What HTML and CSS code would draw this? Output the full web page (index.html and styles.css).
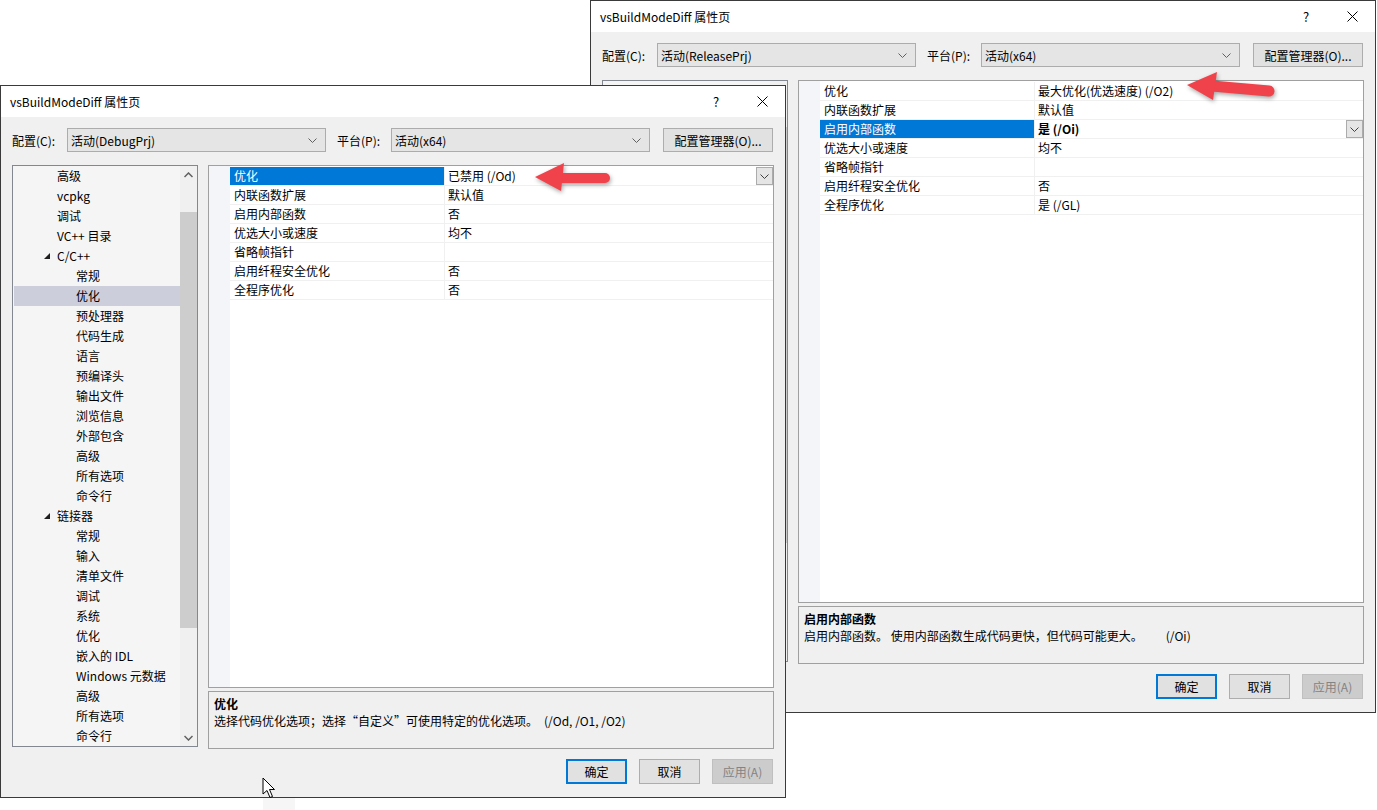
FILE: index.html
```html
<!DOCTYPE html>
<html>
<head>
    <title>vsBuildModeDiff 属性页</title>
    <link rel="stylesheet" href="styles.css">
</head>
<body>
<div class="desktop">

    <!-- Release window (behind); its tree is covered by the front window -->
    <div class="window win-back">
        <div class="titlebar">
            <span class="title">vsBuildModeDiff 属性页</span>
            <span class="cap-btn">?</span>
            <span class="cap-btn"><svg width="11" height="11" viewBox="0 0 11 11"><path d="M0.5 0.5L10.5 10.5M10.5 0.5L0.5 10.5" stroke="#000" stroke-width="1"/></svg></span>
        </div>
        <div class="config-row">
            <span class="cfg-label">配置(C):</span>
            <div class="combo"><span class="combo-text">活动(ReleasePrj)</span><svg class="chev" width="9" height="5" viewBox="0 0 9 5"><polyline points="0.5,0.5 4.5,4.5 8.5,0.5" fill="none" stroke="#606060"/></svg></div>
            <span class="cfg-label platform">平台(P):</span>
            <div class="combo"><span class="combo-text">活动(x64)</span><svg class="chev" width="9" height="5" viewBox="0 0 9 5"><polyline points="0.5,0.5 4.5,4.5 8.5,0.5" fill="none" stroke="#606060"/></svg></div>
            <div class="btn cfg-manager">配置管理器(O)...</div>
        </div>
        <div class="main">
            <div class="tree">
                <div class="tree-list"></div>
                <div class="scrollbar">
                    <div class="sb-btn"></div>
                    <div class="sb-track"><div class="sb-thumb"></div></div>
                    <div class="sb-btn"></div>
                </div>
            </div>
            <div class="side">
                <div class="grid">
                    <div class="gutter"></div>
                    <div class="rows">
                        <div class="row"><span class="name">优化</span><span class="value">最大优化(优选速度) (/O2)</span></div>
                        <div class="row"><span class="name">内联函数扩展</span><span class="value">默认值</span></div>
                        <div class="row sel"><span class="name">启用内部函数</span><span class="value"><b>是 (/Oi)</b></span><span class="drop"><svg width="9" height="5" viewBox="0 0 9 5"><polyline points="0.5,0.5 4.5,4.5 8.5,0.5" fill="none" stroke="#404040"/></svg></span></div>
                        <div class="row"><span class="name">优选大小或速度</span><span class="value">均不</span></div>
                        <div class="row"><span class="name">省略帧指针</span><span class="value"></span></div>
                        <div class="row"><span class="name">启用纤程安全优化</span><span class="value">否</span></div>
                        <div class="row"><span class="name">全程序优化</span><span class="value">是 (/GL)</span></div>
                    </div>
                </div>
                <div class="desc">
                    <div class="desc-title">启用内部函数</div>
                    <div>启用内部函数。 使用内部函数生成代码更快，但代码可能更大。<span class="flag flag-back">(/Oi)</span></div>
                </div>
            </div>
        </div>
        <div class="footer">
            <div class="btn default">确定</div>
            <div class="btn">取消</div>
            <div class="btn disabled">应用(A)</div>
        </div>
    </div>

    <!-- Debug window (front) -->
    <div class="window win-front">
        <div class="titlebar">
            <span class="title">vsBuildModeDiff 属性页</span>
            <span class="cap-btn">?</span>
            <span class="cap-btn"><svg width="11" height="11" viewBox="0 0 11 11"><path d="M0.5 0.5L10.5 10.5M10.5 0.5L0.5 10.5" stroke="#000" stroke-width="1"/></svg></span>
        </div>
        <div class="config-row">
            <span class="cfg-label">配置(C):</span>
            <div class="combo"><span class="combo-text">活动(DebugPrj)</span><svg class="chev" width="9" height="5" viewBox="0 0 9 5"><polyline points="0.5,0.5 4.5,4.5 8.5,0.5" fill="none" stroke="#606060"/></svg></div>
            <span class="cfg-label platform">平台(P):</span>
            <div class="combo"><span class="combo-text">活动(x64)</span><svg class="chev" width="9" height="5" viewBox="0 0 9 5"><polyline points="0.5,0.5 4.5,4.5 8.5,0.5" fill="none" stroke="#606060"/></svg></div>
            <div class="btn cfg-manager">配置管理器(O)...</div>
        </div>
        <div class="main">
            <div class="tree">
                <div class="tree-list">
                    <div class="tree-item">高级</div>
                    <div class="tree-item">vcpkg</div>
                    <div class="tree-item">调试</div>
                    <div class="tree-item">VC++ 目录</div>
                    <div class="tree-item open"><span class="toggle"><svg width="6" height="6" viewBox="0 0 6 6"><polygon points="6,0 6,6 0,6" fill="#1e1e1e"/></svg></span>C/C++</div>
                    <div class="tree-item l2">常规</div>
                    <div class="tree-item l2 sel">优化</div>
                    <div class="tree-item l2">预处理器</div>
                    <div class="tree-item l2">代码生成</div>
                    <div class="tree-item l2">语言</div>
                    <div class="tree-item l2">预编译头</div>
                    <div class="tree-item l2">输出文件</div>
                    <div class="tree-item l2">浏览信息</div>
                    <div class="tree-item l2">外部包含</div>
                    <div class="tree-item l2">高级</div>
                    <div class="tree-item l2">所有选项</div>
                    <div class="tree-item l2">命令行</div>
                    <div class="tree-item open"><span class="toggle"><svg width="6" height="6" viewBox="0 0 6 6"><polygon points="6,0 6,6 0,6" fill="#1e1e1e"/></svg></span>链接器</div>
                    <div class="tree-item l2">常规</div>
                    <div class="tree-item l2">输入</div>
                    <div class="tree-item l2">清单文件</div>
                    <div class="tree-item l2">调试</div>
                    <div class="tree-item l2">系统</div>
                    <div class="tree-item l2">优化</div>
                    <div class="tree-item l2">嵌入的 IDL</div>
                    <div class="tree-item l2">Windows 元数据</div>
                    <div class="tree-item l2">高级</div>
                    <div class="tree-item l2">所有选项</div>
                    <div class="tree-item l2">命令行</div>
                </div>
                <div class="scrollbar">
                    <div class="sb-btn"><svg width="9" height="6" viewBox="0 0 9 6"><polyline points="0.5,5 4.5,1 8.5,5" fill="none" stroke="#606060" stroke-width="1.5"/></svg></div>
                    <div class="sb-track"><div class="sb-thumb"></div></div>
                    <div class="sb-btn"><svg width="9" height="6" viewBox="0 0 9 6"><polyline points="0.5,1 4.5,5 8.5,1" fill="none" stroke="#606060" stroke-width="1.5"/></svg></div>
                </div>
            </div>
            <div class="side">
                <div class="grid">
                    <div class="gutter"></div>
                    <div class="rows">
                        <div class="row sel"><span class="name">优化</span><span class="value">已禁用 (/Od)</span><span class="drop"><svg width="9" height="5" viewBox="0 0 9 5"><polyline points="0.5,0.5 4.5,4.5 8.5,0.5" fill="none" stroke="#404040"/></svg></span></div>
                        <div class="row"><span class="name">内联函数扩展</span><span class="value">默认值</span></div>
                        <div class="row"><span class="name">启用内部函数</span><span class="value">否</span></div>
                        <div class="row"><span class="name">优选大小或速度</span><span class="value">均不</span></div>
                        <div class="row"><span class="name">省略帧指针</span><span class="value"></span></div>
                        <div class="row"><span class="name">启用纤程安全优化</span><span class="value">否</span></div>
                        <div class="row"><span class="name">全程序优化</span><span class="value">否</span></div>
                    </div>
                </div>
                <div class="desc">
                    <div class="desc-title">优化</div>
                    <div>选择代码优化选项；选择“自定义”可使用特定的优化选项。<span class="flag flag-front">(/Od, /O1, /O2)</span></div>
                </div>
            </div>
        </div>
        <div class="footer">
            <div class="btn default">确定</div>
            <div class="btn">取消</div>
            <div class="btn disabled">应用(A)</div>
        </div>
    </div>

    <!-- annotations -->
    <svg class="arrow arrow-front" width="92" height="40" viewBox="0 0 92 40">
        <line x1="34" y1="21" x2="78" y2="21" stroke="#f0424a" stroke-width="10" stroke-linecap="round"/>
        <polygon points="8,20 37,6 34,34" fill="#f0424a"/>
    </svg>
    <svg class="arrow arrow-back" width="106" height="48" viewBox="0 0 106 48">
        <line x1="34" y1="24" x2="91" y2="29" stroke="#f0424a" stroke-width="11" stroke-linecap="round"/>
        <polygon points="9,23 39,10 35,38" fill="#f0424a"/>
    </svg>
    <div class="ghost"></div>
    <svg class="cursor" width="14" height="22" viewBox="0 0 14 22">
        <path d="M1 1L1 17L5 13.5L8 20.5L10.5 19.5L7.5 12.5L12.5 12.5Z" fill="#fff" stroke="#000" stroke-width="1" stroke-linejoin="round"/>
    </svg>
</div>
</body>
</html>
```

FILE: styles.css
```css
* {
    box-sizing: border-box;
}
body {
    margin: 0;
    background: #fff;
    font-family: "Noto Sans CJK SC", sans-serif;
    font-size: 12px;
    color: #000;
    overflow: hidden;
}
.desktop {
    position: relative;
    width: 1377px;
    height: 810px;
}
.window {
    position: absolute;
    width: 786px;
    height: 713px;
    border: 1px solid #3a3a3a;
    background: #f0f0f0;
    display: flex;
    flex-direction: column;
}
.win-back {
    left: 590px;
    top: 0;
}
.win-front {
    left: 0;
    top: 85px;
}
.titlebar {
    height: 31px;
    background: #fff;
    display: flex;
    align-items: center;
}
.title {
    flex: 1;
    padding-left: 9px;
    font-size: 12px;
}
.cap-btn {
    width: 46px;
    height: 31px;
    display: flex;
    align-items: center;
    justify-content: center;
    font-size: 13px;
}
.config-row {
    margin-top: 11px;
    height: 24px;
    display: flex;
    align-items: center;
    padding-left: 11px;
}
.cfg-label {
    width: 55px;
    white-space: nowrap;
}
.cfg-label.platform {
    margin-left: 11px;
    width: 54px;
}
.combo {
    width: 259px;
    height: 24px;
    border: 1px solid #acacac;
    background: #e5e5e5;
    display: flex;
    align-items: center;
    padding-left: 3px;
}
.combo-text {
    flex: 1;
}
.combo .chev {
    margin-right: 8px;
}
.btn {
    color: #000;
    background: #e1e1e1;
    border: 1px solid #adadad;
    display: flex;
    align-items: center;
    justify-content: center;
    white-space: nowrap;
}
.cfg-manager {
    margin-left: 13px;
    width: 110px;
    height: 24px;
}
.main {
    margin-top: 13px;
    height: 584px;
    display: flex;
    gap: 10px;
    padding-left: 11px;
}
.tree {
    width: 186px;
    height: 582px;
    border: 1px solid #828790;
    background: #f5f5f5;
    display: flex;
    overflow: hidden;
}
.tree-list {
    flex: 1;
    padding-left: 1px;
}
.tree-item {
    height: 20px;
    line-height: 20px;
    padding-left: 43px;
    display: flex;
    align-items: center;
    white-space: nowrap;
}
.tree-item.l2 {
    padding-left: 62px;
}
.tree-item.open {
    padding-left: 30px;
}
.toggle {
    width: 13px;
    display: flex;
    align-items: center;
}
.tree-item.sel {
    background: #cccedb;
}
.scrollbar {
    width: 17px;
    background: #f0f0f0;
    display: flex;
    flex-direction: column;
}
.sb-btn {
    height: 17px;
    display: flex;
    align-items: center;
    justify-content: center;
}
.sb-track {
    flex: 1;
    padding-top: 29px;
}
.sb-thumb {
    height: 416px;
    background: #cdcdcd;
}
.side {
    width: 566px;
    display: flex;
    flex-direction: column;
    gap: 3px;
}
.grid {
    height: 523px;
    border: 1px solid #a0a0a0;
    background: #fff;
    display: flex;
}
.gutter {
    width: 21px;
    background: #f3f5f9;
}
.rows {
    flex: 1;
    padding-top: 1px;
}
.row {
    height: 19px;
    display: flex;
    border-bottom: 1px solid #f0f0f0;
}
.name {
    width: 215px;
    padding-left: 4px;
    line-height: 18px;
    border-right: 1px solid #f0f0f0;
    white-space: nowrap;
}
.value {
    flex: 1;
    padding-left: 3px;
    line-height: 18px;
    white-space: nowrap;
}
.row.sel .name {
    background: #0078d7;
    color: #fff;
}
.drop {
    width: 17px;
    height: 18px;
    background: #e5e5e5;
    border: 1px solid #acacac;
    display: flex;
    align-items: center;
    justify-content: center;
}
.desc {
    height: 58px;
    border: 1px solid #a0a0a0;
    padding: 3px 5px;
    line-height: 17px;
    white-space: nowrap;
}
.desc-title {
    font-weight: bold;
}
.flag-front {
    margin-left: 6px;
}
.flag-back {
    margin-left: 23px;
}
.footer {
    margin-top: 10px;
    height: 25px;
    display: flex;
    justify-content: flex-end;
    gap: 12px;
    padding-right: 12px;
}
.footer .btn {
    width: 61px;
    height: 25px;
}
.btn.default {
    border: 2px solid #0078d7;
}
.btn.disabled {
    background: #cccccc;
    border-color: #bfbfbf;
    color: #838383;
}
.arrow {
    position: absolute;
    filter: drop-shadow(1px 2px 2px rgba(0, 0, 0, 0.35));
}
.arrow-front {
    left: 527px;
    top: 157px;
}
.arrow-back {
    left: 1178px;
    top: 62px;
}
.ghost {
    position: absolute;
    left: 263px;
    top: 798px;
    width: 32px;
    height: 12px;
    background: #f6f6f6;
}
.cursor {
    position: absolute;
    left: 262px;
    top: 777px;
}
```
